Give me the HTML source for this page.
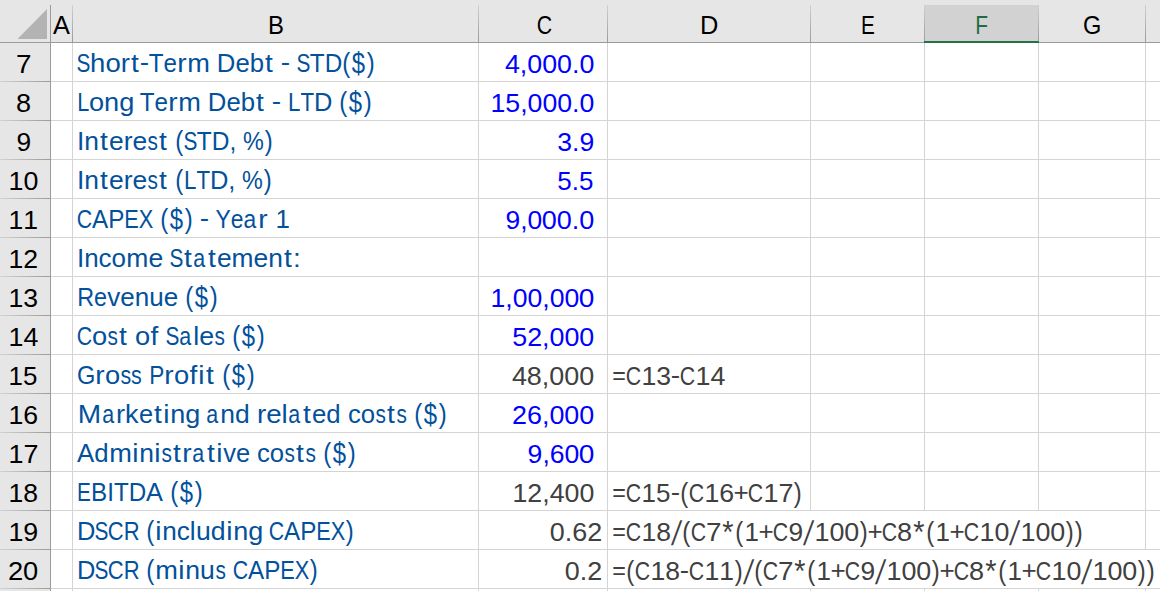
<!DOCTYPE html><html><head><meta charset="utf-8"><title>Sheet</title><style>
html,body{margin:0;padding:0;background:#fff;}
body{width:1160px;height:591px;overflow:hidden;position:relative;font-family:"Liberation Sans",sans-serif;font-size:26px;line-height:39px;font-kerning:none;font-variant-ligatures:none;}
#s{position:absolute;left:0;top:0;width:1160px;height:591px;overflow:hidden;background:#fff;}
#s div,#s svg{position:absolute;}
.hb{background:#e6e6e6;}
.gl{background:#d4d4d4;}
#s .t{white-space:pre;height:39px;line-height:39px;}
.t i{display:inline-block;font-style:normal;white-space:pre;transform-origin:0 28.0px;height:39px;vertical-align:top;}
.lb{color:#03519b;}
.b{color:#0000ff;}
.k{color:#404040;}
.h{color:#000;}
.g{color:#1e6b41;}
</style></head><body><div id="s">
<div class="hb" style="left:0;top:0;width:1160px;height:42px"></div>
<div class="hb" style="left:0;top:0;width:50px;height:591px"></div>
<div style="left:925px;top:5px;width:113px;height:36px;background:#d2d2d2"></div>
<div class="gl" style="left:51px;top:81px;width:1109px;height:1px"></div>
<div style="left:0;top:81px;width:50px;height:1px;background:linear-gradient(to right,#d2d2d2,#9b9b9b)"></div>
<div class="gl" style="left:51px;top:120px;width:1109px;height:1px"></div>
<div style="left:0;top:120px;width:50px;height:1px;background:linear-gradient(to right,#d2d2d2,#9b9b9b)"></div>
<div class="gl" style="left:51px;top:159px;width:1109px;height:1px"></div>
<div style="left:0;top:159px;width:50px;height:1px;background:linear-gradient(to right,#d2d2d2,#9b9b9b)"></div>
<div class="gl" style="left:51px;top:198px;width:1109px;height:1px"></div>
<div style="left:0;top:198px;width:50px;height:1px;background:linear-gradient(to right,#d2d2d2,#9b9b9b)"></div>
<div class="gl" style="left:51px;top:237px;width:1109px;height:1px"></div>
<div style="left:0;top:237px;width:50px;height:1px;background:linear-gradient(to right,#d2d2d2,#9b9b9b)"></div>
<div class="gl" style="left:51px;top:276px;width:1109px;height:1px"></div>
<div style="left:0;top:276px;width:50px;height:1px;background:linear-gradient(to right,#d2d2d2,#9b9b9b)"></div>
<div class="gl" style="left:51px;top:315px;width:1109px;height:1px"></div>
<div style="left:0;top:315px;width:50px;height:1px;background:linear-gradient(to right,#d2d2d2,#9b9b9b)"></div>
<div class="gl" style="left:51px;top:354px;width:1109px;height:1px"></div>
<div style="left:0;top:354px;width:50px;height:1px;background:linear-gradient(to right,#d2d2d2,#9b9b9b)"></div>
<div class="gl" style="left:51px;top:393px;width:1109px;height:1px"></div>
<div style="left:0;top:393px;width:50px;height:1px;background:linear-gradient(to right,#d2d2d2,#9b9b9b)"></div>
<div class="gl" style="left:51px;top:432px;width:1109px;height:1px"></div>
<div style="left:0;top:432px;width:50px;height:1px;background:linear-gradient(to right,#d2d2d2,#9b9b9b)"></div>
<div class="gl" style="left:51px;top:471px;width:1109px;height:1px"></div>
<div style="left:0;top:471px;width:50px;height:1px;background:linear-gradient(to right,#d2d2d2,#9b9b9b)"></div>
<div class="gl" style="left:51px;top:510px;width:1109px;height:1px"></div>
<div style="left:0;top:510px;width:50px;height:1px;background:linear-gradient(to right,#d2d2d2,#9b9b9b)"></div>
<div class="gl" style="left:51px;top:549px;width:1109px;height:1px"></div>
<div style="left:0;top:549px;width:50px;height:1px;background:linear-gradient(to right,#d2d2d2,#9b9b9b)"></div>
<div class="gl" style="left:51px;top:588px;width:1109px;height:1px"></div>
<div style="left:0;top:588px;width:50px;height:1px;background:linear-gradient(to right,#d2d2d2,#9b9b9b)"></div>
<div class="gl" style="left:72px;top:43px;width:1px;height:548px"></div>
<div class="gl" style="left:478px;top:43px;width:1px;height:548px"></div>
<div class="gl" style="left:607px;top:43px;width:1px;height:548px"></div>
<div class="gl" style="left:810px;top:43px;width:1px;height:468px"></div>
<div class="gl" style="left:810px;top:588px;width:1px;height:3px"></div>
<div class="gl" style="left:924px;top:43px;width:1px;height:468px"></div>
<div class="gl" style="left:924px;top:588px;width:1px;height:3px"></div>
<div class="gl" style="left:1038px;top:43px;width:1px;height:468px"></div>
<div class="gl" style="left:1038px;top:588px;width:1px;height:3px"></div>
<div class="gl" style="left:1145px;top:43px;width:1px;height:507px"></div>
<div class="gl" style="left:1145px;top:588px;width:1px;height:3px"></div>
<div style="left:0;top:42px;width:1160px;height:1px;background:#9b9b9b"></div>
<div style="left:50px;top:5px;width:1px;height:591px;background:#9b9b9b"></div>
<div style="left:72px;top:5px;width:1px;height:37px;background:linear-gradient(#cfcfcf,#9b9b9b)"></div>
<div style="left:478px;top:5px;width:1px;height:37px;background:linear-gradient(#cfcfcf,#9b9b9b)"></div>
<div style="left:607px;top:5px;width:1px;height:37px;background:linear-gradient(#cfcfcf,#9b9b9b)"></div>
<div style="left:810px;top:5px;width:1px;height:37px;background:linear-gradient(#cfcfcf,#9b9b9b)"></div>
<div style="left:924px;top:5px;width:1px;height:37px;background:linear-gradient(#cfcfcf,#9b9b9b)"></div>
<div style="left:1038px;top:5px;width:1px;height:37px;background:linear-gradient(#cfcfcf,#9b9b9b)"></div>
<div style="left:1145px;top:5px;width:1px;height:37px;background:linear-gradient(#cfcfcf,#9b9b9b)"></div>
<div style="left:924px;top:41px;width:115px;height:2px;background:#217346"></div>
<svg style="left:0;top:0" width="50" height="42"><polygon points="47,9 47,39 17.5,39" fill="#b3b3b3"/></svg>
<div class="t h" aria-label="A" style="left:52.89px;top:6.00px;width:17px"><i style="width:17px;transform:translateX(0.06px) scaleX(0.9737)">A</i></div>
<div class="t h" aria-label="B" style="left:268.10px;top:6.00px;width:16px"><i style="width:16px;transform:translateX(0.08px) scaleX(0.9188)">B</i></div>
<div class="t h" aria-label="C" style="left:536.61px;top:6.00px;width:15px"><i style="width:15px;transform:translateX(-0.13px) scaleX(0.8190)">C</i></div>
<div class="t h" aria-label="D" style="left:699.90px;top:6.00px;width:18px"><i style="width:18px;transform:translateX(-0.12px) scaleX(0.9785)">D</i></div>
<div class="t h" aria-label="E" style="left:860.98px;top:6.00px;width:14px"><i style="width:14px;transform:translateX(0.07px) scaleX(0.8000)">E</i></div>
<div class="t g" aria-label="F" style="left:975.14px;top:6.00px;width:13px"><i style="width:13px;transform:translateX(0.24px) scaleX(0.8035)">F</i></div>
<div class="t h" aria-label="G" style="left:1083.21px;top:6.00px;width:18px"><i style="width:18px;transform:translateX(-0.10px) scaleX(0.9070)">G</i></div>
<div class="t h" aria-label="7" style="left:15.90px;top:45.00px;width:15px"><i style="width:15px;transform:translateX(-0.04px) scaleX(1.0726)">7</i></div>
<div class="t h" aria-label="8" style="left:15.90px;top:84.00px;width:15px"><i style="width:15px;transform:translateX(-0.01px) scaleX(1.0391)">8</i></div>
<div class="t h" aria-label="9" style="left:15.90px;top:123.00px;width:15px"><i style="width:15px;transform:translateX(0.62px) scaleX(1.0120)">9</i></div>
<div class="t h" aria-label="10" style="left:8.40px;top:162.00px;width:30px"><i style="width:30px;transform:translateX(0.46px) scaleX(1.0316)">10</i></div>
<div class="t h" aria-label="11" style="left:8.40px;top:201.00px;width:30px"><i style="width:30px;transform:translateX(0.49px) scaleX(1.0203)">11</i></div>
<div class="t h" aria-label="12" style="left:8.40px;top:240.00px;width:30px"><i style="width:30px;transform:translateX(0.48px) scaleX(1.0246)">12</i></div>
<div class="t h" aria-label="13" style="left:8.40px;top:279.00px;width:30px"><i style="width:30px;transform:translateX(0.48px) scaleX(1.0230)">13</i></div>
<div class="t h" aria-label="14" style="left:8.40px;top:318.00px;width:30px"><i style="width:30px;transform:translateX(0.46px) scaleX(1.0319)">14</i></div>
<div class="t h" aria-label="15" style="left:8.40px;top:357.00px;width:30px"><i style="width:30px;transform:translateX(0.53px) scaleX(0.9974)">15</i></div>
<div class="t h" aria-label="16" style="left:8.40px;top:396.00px;width:30px"><i style="width:30px;transform:translateX(0.47px) scaleX(1.0268)">16</i></div>
<div class="t h" aria-label="17" style="left:8.40px;top:435.00px;width:30px"><i style="width:30px;transform:translateX(0.45px) scaleX(1.0362)">17</i></div>
<div class="t h" aria-label="18" style="left:8.40px;top:474.00px;width:30px"><i style="width:30px;transform:translateX(0.49px) scaleX(1.0203)">18</i></div>
<div class="t h" aria-label="19" style="left:8.40px;top:513.00px;width:30px"><i style="width:30px;transform:translateX(0.46px) scaleX(1.0309)">19</i></div>
<div class="t h" aria-label="20" style="left:8.40px;top:552.00px;width:30px"><i style="width:30px;transform:translateX(-0.07px) scaleX(1.0508)">20</i></div>
<div class="t lb" aria-label="Short-Term Debt - STD($)" style="left:77.40px;top:44.00px;width:298px"><i style="width:13px;transform:translateX(-0.55px) scaleX(0.8000)">S</i><i style="width:40px;transform:translateX(0.12px) scaleX(1.0584)">hor</i><i style="width:10px;transform:translateX(0.98px) scaleX(1.0800)">t</i><i style="width:9px;transform:translate(-0.17px,-1.29px) scale(1.0800,1.0000)">-</i><i style="width:28px;transform:translateX(-0.20px) scaleX(0.9304)">Te</i><i style="width:10px;transform:translateX(0.27px) scaleX(1.0800)">r</i><i style="width:30px;transform:translateX(0.27px) scaleX(1.0464)">m </i><i style="width:47px;transform:translateX(-0.14px) scaleX(0.9890)">Deb</i><i style="width:17px;transform:translateX(0.98px) scaleX(1.0800)">t </i><i style="width:16px;transform:translate(-0.17px,-1.29px) scale(1.0800,1.0000)">- </i><i style="width:13px;transform:translateX(-0.55px) scaleX(0.8000)">S</i><i style="width:32px;transform:translateX(-0.21px) scaleX(0.9350)">TD</i><i style="width:9px;transform:translate(0.18px,-0.28px) scale(0.9200,1.0362)">(</i><i style="width:15px;transform:translate(0.87px,0.94px) scale(0.9200,1.1402)">$</i><i style="width:9px;transform:translate(0.86px,-0.28px) scale(0.9200,1.0362)">)</i></div>
<div class="t lb" aria-label="Long Term Debt - LTD ($)" style="left:77.40px;top:83.00px;width:295px"><i style="width:12px;transform:translateX(0.17px) scaleX(0.8343)">L</i><i style="width:51px;transform:translateX(-0.08px) scaleX(1.0447)">ong </i><i style="width:28px;transform:translateX(-0.20px) scaleX(0.9304)">Te</i><i style="width:10px;transform:translateX(0.27px) scaleX(1.0800)">r</i><i style="width:30px;transform:translateX(0.27px) scaleX(1.0464)">m </i><i style="width:47px;transform:translateX(-0.14px) scaleX(0.9890)">Deb</i><i style="width:17px;transform:translateX(0.98px) scaleX(1.0800)">t </i><i style="width:16px;transform:translate(-0.17px,-1.29px) scale(1.0800,1.0000)">- </i><i style="width:26px;transform:translateX(0.12px) scaleX(0.8585)">LT</i><i style="width:25px;transform:translateX(-0.12px) scaleX(0.9785)">D </i><i style="width:9px;transform:translate(0.18px,-0.28px) scale(0.9200,1.0362)">(</i><i style="width:15px;transform:translate(0.87px,0.94px) scale(0.9200,1.1402)">$</i><i style="width:9px;transform:translate(0.86px,-0.28px) scale(0.9200,1.0362)">)</i></div>
<div class="t lb" aria-label="Interest (STD, %)" style="left:77.40px;top:122.00px;width:196px"><i style="width:22px;transform:translateX(-0.07px) scaleX(1.0153)">In</i><i style="width:10px;transform:translateX(0.98px) scaleX(1.0800)">t</i><i style="width:38px;transform:translateX(-0.06px) scaleX(1.0162)">ere</i><i style="width:11px;transform:translateX(0.39px) scaleX(0.8000)">s</i><i style="width:17px;transform:translateX(0.98px) scaleX(1.0800)">t </i><i style="width:9px;transform:translate(0.18px,-0.28px) scale(0.9200,1.0362)">(</i><i style="width:13px;transform:translateX(-0.55px) scaleX(0.8000)">S</i><i style="width:46px;transform:translateX(-0.21px) scaleX(0.9432)">TD, </i><i style="width:21px;transform:translateX(0.10px) scaleX(0.8997)">%</i><i style="width:9px;transform:translate(0.86px,-0.28px) scale(0.9200,1.0362)">)</i></div>
<div class="t lb" aria-label="Interest (LTD, %)" style="left:77.40px;top:161.00px;width:195px"><i style="width:22px;transform:translateX(-0.07px) scaleX(1.0153)">In</i><i style="width:10px;transform:translateX(0.98px) scaleX(1.0800)">t</i><i style="width:38px;transform:translateX(-0.06px) scaleX(1.0162)">ere</i><i style="width:11px;transform:translateX(0.39px) scaleX(0.8000)">s</i><i style="width:17px;transform:translateX(0.98px) scaleX(1.0800)">t </i><i style="width:9px;transform:translate(0.18px,-0.28px) scale(0.9200,1.0362)">(</i><i style="width:26px;transform:translateX(0.12px) scaleX(0.8585)">LT</i><i style="width:32px;transform:translateX(-0.12px) scaleX(0.9809)">D, </i><i style="width:21px;transform:translateX(0.10px) scaleX(0.8997)">%</i><i style="width:9px;transform:translate(0.86px,-0.28px) scale(0.9200,1.0362)">)</i></div>
<div class="t lb" aria-label="CAPEX ($) - Year 1" style="left:77.40px;top:200.00px;width:213px"><i style="width:15px;transform:translateX(-0.13px) scaleX(0.8190)">C</i><i style="width:32px;transform:translateX(0.07px) scaleX(0.9314)">AP</i><i style="width:36px;transform:translateX(0.27px) scaleX(0.8371)">EX </i><i style="width:9px;transform:translate(0.18px,-0.28px) scale(0.9200,1.0362)">(</i><i style="width:15px;transform:translate(0.87px,0.94px) scale(0.9200,1.1402)">$</i><i style="width:16px;transform:translate(0.86px,-0.28px) scale(0.9200,1.0362)">) </i><i style="width:16px;transform:translate(-0.17px,-1.29px) scale(1.0800,1.0000)">- </i><i style="width:42px;transform:translateX(-0.50px) scaleX(0.8802)">Yea</i><i style="width:17px;transform:translateX(0.27px) scaleX(1.0800)">r </i><i style="width:15px;transform:translateX(0.53px) scaleX(0.9983)">1</i></div>
<div class="t lb" aria-label="Income Statement:" style="left:77.40px;top:239.00px;width:224px"><i style="width:49px;transform:translateX(-0.03px) scaleX(0.9983)">Inco</i><i style="width:44px;transform:translateX(0.32px) scaleX(1.0191)">me </i><i style="width:13px;transform:translateX(-0.55px) scaleX(0.8000)">S</i><i style="width:10px;transform:translateX(0.98px) scaleX(1.0800)">t</i><i style="width:14px;transform:translateX(0.28px) scaleX(0.8256)">a</i><i style="width:10px;transform:translateX(0.98px) scaleX(1.0800)">t</i><i style="width:66px;transform:translateX(-0.06px) scaleX(1.0148)">emen</i><i style="width:10px;transform:translateX(0.98px) scaleX(1.0800)">t</i><i style="width:8px;transform:translateX(0.04px) scaleX(1.0800)">:</i></div>
<div class="t lb" aria-label="Revenue ($)" style="left:77.40px;top:278.00px;width:141px"><i style="width:30px;transform:translateX(0.17px) scaleX(0.8972)">Re</i><i style="width:78px;transform:translateX(0.18px) scaleX(1.0013)">venue </i><i style="width:9px;transform:translate(0.18px,-0.28px) scale(0.9200,1.0362)">(</i><i style="width:15px;transform:translate(0.87px,0.94px) scale(0.9200,1.1402)">$</i><i style="width:9px;transform:translate(0.86px,-0.28px) scale(0.9200,1.0362)">)</i></div>
<div class="t lb" aria-label="Cost of Sales ($)" style="left:77.40px;top:317.00px;width:188px"><i style="width:15px;transform:translateX(-0.13px) scaleX(0.8190)">C</i><i style="width:15px;transform:translateX(-0.08px) scaleX(1.0488)">o</i><i style="width:11px;transform:translateX(0.39px) scaleX(0.8000)">s</i><i style="width:17px;transform:translateX(0.98px) scaleX(1.0800)">t </i><i style="width:15px;transform:translateX(-0.08px) scaleX(1.0488)">o</i><i style="width:16px;transform:translateX(0.45px) scaleX(1.0800)">f </i><i style="width:13px;transform:translateX(-0.55px) scaleX(0.8000)">S</i><i style="width:14px;transform:translateX(0.28px) scaleX(0.8256)">a</i><i style="width:21px;transform:translateX(0.27px) scaleX(1.0312)">le</i><i style="width:18px;transform:translateX(0.39px) scaleX(0.8000)">s </i><i style="width:9px;transform:translate(0.18px,-0.28px) scale(0.9200,1.0362)">(</i><i style="width:15px;transform:translate(0.87px,0.94px) scale(0.9200,1.1402)">$</i><i style="width:9px;transform:translate(0.86px,-0.28px) scale(0.9200,1.0362)">)</i></div>
<div class="t lb" aria-label="Gross Profit ($)" style="left:77.40px;top:356.00px;width:178px"><i style="width:18px;transform:translateX(-0.10px) scaleX(0.9070)">G</i><i style="width:10px;transform:translateX(0.27px) scaleX(1.0800)">r</i><i style="width:15px;transform:translateX(-0.08px) scaleX(1.0488)">o</i><i style="width:29px;transform:translateX(0.40px) scaleX(0.8231)">ss </i><i style="width:15px;transform:translateX(0.23px) scaleX(0.8681)">P</i><i style="width:10px;transform:translateX(0.27px) scaleX(1.0800)">r</i><i style="width:15px;transform:translateX(-0.08px) scaleX(1.0488)">o</i><i style="width:9px;transform:translateX(0.45px) scaleX(1.0800)">f</i><i style="width:7px;transform:translateX(0.37px) scaleX(1.0800)">i</i><i style="width:17px;transform:translateX(0.98px) scaleX(1.0800)">t </i><i style="width:9px;transform:translate(0.18px,-0.28px) scale(0.9200,1.0362)">(</i><i style="width:15px;transform:translate(0.87px,0.94px) scale(0.9200,1.1402)">$</i><i style="width:9px;transform:translate(0.86px,-0.28px) scale(0.9200,1.0362)">)</i></div>
<div class="t lb" aria-label="Marketing and related costs ($)" style="left:77.40px;top:395.00px;width:370px"><i style="width:25px;transform:translateX(0.80px) scaleX(1.0800)">M</i><i style="width:14px;transform:translateX(0.28px) scaleX(0.8256)">a</i><i style="width:23px;transform:translateX(0.06px) scaleX(1.0411)">rk</i><i style="width:14px;transform:translateX(-0.01px) scaleX(0.9746)">e</i><i style="width:10px;transform:translateX(0.98px) scaleX(1.0800)">t</i><i style="width:7px;transform:translateX(0.37px) scaleX(1.0800)">i</i><i style="width:36px;transform:translateX(0.19px) scaleX(1.0388)">ng </i><i style="width:14px;transform:translateX(0.28px) scaleX(0.8256)">a</i><i style="width:37px;transform:translateX(0.22px) scaleX(1.0181)">nd </i><i style="width:31px;transform:translateX(0.02px) scaleX(1.0643)">rel</i><i style="width:14px;transform:translateX(0.28px) scaleX(0.8256)">a</i><i style="width:10px;transform:translateX(0.98px) scaleX(1.0800)">t</i><i style="width:36px;transform:translateX(-0.03px) scaleX(0.9908)">ed </i><i style="width:27px;transform:translateX(-0.11px) scaleX(0.9880)">co</i><i style="width:11px;transform:translateX(0.39px) scaleX(0.8000)">s</i><i style="width:10px;transform:translateX(0.98px) scaleX(1.0800)">t</i><i style="width:18px;transform:translateX(0.39px) scaleX(0.8000)">s </i><i style="width:9px;transform:translate(0.18px,-0.28px) scale(0.9200,1.0362)">(</i><i style="width:15px;transform:translate(0.87px,0.94px) scale(0.9200,1.1402)">$</i><i style="width:9px;transform:translate(0.86px,-0.28px) scale(0.9200,1.0362)">)</i></div>
<div class="t lb" aria-label="Administrative costs ($)" style="left:77.40px;top:434.00px;width:279px"><i style="width:32px;transform:translateX(0.06px) scaleX(0.9924)">Ad</i><i style="width:23px;transform:translateX(0.27px) scaleX(1.0464)">m</i><i style="width:7px;transform:translateX(0.37px) scaleX(1.0800)">i</i><i style="width:15px;transform:translateX(0.22px) scaleX(1.0183)">n</i><i style="width:7px;transform:translateX(0.37px) scaleX(1.0800)">i</i><i style="width:11px;transform:translateX(0.39px) scaleX(0.8000)">s</i><i style="width:10px;transform:translateX(0.98px) scaleX(1.0800)">t</i><i style="width:10px;transform:translateX(0.27px) scaleX(1.0800)">r</i><i style="width:14px;transform:translateX(0.28px) scaleX(0.8256)">a</i><i style="width:10px;transform:translateX(0.98px) scaleX(1.0800)">t</i><i style="width:7px;transform:translateX(0.37px) scaleX(1.0800)">i</i><i style="width:34px;transform:translateX(0.18px) scaleX(0.9797)">ve </i><i style="width:27px;transform:translateX(-0.11px) scaleX(0.9880)">co</i><i style="width:11px;transform:translateX(0.39px) scaleX(0.8000)">s</i><i style="width:10px;transform:translateX(0.98px) scaleX(1.0800)">t</i><i style="width:18px;transform:translateX(0.39px) scaleX(0.8000)">s </i><i style="width:9px;transform:translate(0.18px,-0.28px) scale(0.9200,1.0362)">(</i><i style="width:15px;transform:translate(0.87px,0.94px) scale(0.9200,1.1402)">$</i><i style="width:9px;transform:translate(0.86px,-0.28px) scale(0.9200,1.0362)">)</i></div>
<div class="t lb" aria-label="EBITDA ($)" style="left:77.40px;top:473.00px;width:126px"><i style="width:14px;transform:translateX(0.07px) scaleX(0.8000)">E</i><i style="width:55px;transform:translateX(0.05px) scaleX(0.9311)">BITD</i><i style="width:24px;transform:translateX(0.06px) scaleX(0.9737)">A </i><i style="width:9px;transform:translate(0.18px,-0.28px) scale(0.9200,1.0362)">(</i><i style="width:15px;transform:translate(0.87px,0.94px) scale(0.9200,1.1402)">$</i><i style="width:9px;transform:translate(0.86px,-0.28px) scale(0.9200,1.0362)">)</i></div>
<div class="t lb" aria-label="DSCR (including CAPEX)" style="left:77.40px;top:512.00px;width:277px"><i style="width:18px;transform:translateX(-0.12px) scaleX(0.9785)">D</i><i style="width:13px;transform:translateX(-0.55px) scaleX(0.8000)">S</i><i style="width:38px;transform:translateX(-0.17px) scaleX(0.8458)">CR </i><i style="width:9px;transform:translate(0.18px,-0.28px) scale(0.9200,1.0362)">(</i><i style="width:7px;transform:translateX(0.37px) scaleX(1.0800)">i</i><i style="width:34px;transform:translateX(0.25px) scaleX(1.0056)">ncl</i><i style="width:30px;transform:translateX(0.04px) scaleX(1.0249)">ud</i><i style="width:7px;transform:translateX(0.37px) scaleX(1.0800)">i</i><i style="width:36px;transform:translateX(0.19px) scaleX(1.0388)">ng </i><i style="width:15px;transform:translateX(-0.13px) scaleX(0.8190)">C</i><i style="width:32px;transform:translateX(0.07px) scaleX(0.9314)">AP</i><i style="width:29px;transform:translateX(0.27px) scaleX(0.8371)">EX</i><i style="width:9px;transform:translate(0.86px,-0.28px) scale(0.9200,1.0362)">)</i></div>
<div class="t lb" aria-label="DSCR (minus CAPEX)" style="left:77.40px;top:551.00px;width:241px"><i style="width:18px;transform:translateX(-0.12px) scaleX(0.9785)">D</i><i style="width:13px;transform:translateX(-0.55px) scaleX(0.8000)">S</i><i style="width:38px;transform:translateX(-0.17px) scaleX(0.8458)">CR </i><i style="width:9px;transform:translate(0.18px,-0.28px) scale(0.9200,1.0362)">(</i><i style="width:23px;transform:translateX(0.27px) scaleX(1.0464)">m</i><i style="width:7px;transform:translateX(0.37px) scaleX(1.0800)">i</i><i style="width:30px;transform:translateX(0.22px) scaleX(1.0223)">nu</i><i style="width:18px;transform:translateX(0.39px) scaleX(0.8000)">s </i><i style="width:15px;transform:translateX(-0.13px) scaleX(0.8190)">C</i><i style="width:32px;transform:translateX(0.07px) scaleX(0.9314)">AP</i><i style="width:29px;transform:translateX(0.27px) scaleX(0.8371)">EX</i><i style="width:9px;transform:translate(0.86px,-0.28px) scale(0.9200,1.0362)">)</i></div>
<div class="t b" aria-label="4,000.0" style="left:505.00px;top:45.00px;width:89px"><i style="width:89px;transform:translateX(-0.12px) scaleX(1.0308)">4,000.0</i></div>
<div class="t b" aria-label="15,000.0" style="left:490.00px;top:84.00px;width:104px"><i style="width:104px;transform:translateX(0.47px) scaleX(1.0258)">15,000.0</i></div>
<div class="t b" aria-label="3.9" style="left:557.00px;top:123.00px;width:37px"><i style="width:37px;transform:translateX(0.33px) scaleX(1.0219)">3.9</i></div>
<div class="t b" aria-label="5.5" style="left:557.00px;top:162.00px;width:37px"><i style="width:37px;transform:translateX(0.28px) scaleX(0.9988)">5.5</i></div>
<div class="t b" aria-label="9,000.0" style="left:505.00px;top:201.00px;width:89px"><i style="width:37px;transform:translateX(0.62px) scaleX(1.0143)">9,0</i><i style="width:52px;transform:translateX(-0.31px) scaleX(1.0397)">00.0</i></div>
<div class="t b" aria-label="1,00,000" style="left:490.00px;top:279.00px;width:104px"><i style="width:89px;transform:translateX(0.48px) scaleX(1.0238)">1,00,00</i><i style="width:15px;transform:translateX(-0.31px) scaleX(1.0800)">0</i></div>
<div class="t b" aria-label="52,000" style="left:512.00px;top:318.00px;width:82px"><i style="width:82px;transform:translateX(0.24px) scaleX(1.0318)">52,000</i></div>
<div class="t k" aria-label="48,000" style="left:512.00px;top:357.00px;width:82px"><i style="width:82px;transform:translateX(-0.12px) scaleX(1.0365)">48,000</i></div>
<div class="t b" aria-label="26,000" style="left:512.00px;top:396.00px;width:82px"><i style="width:82px;transform:translateX(-0.05px) scaleX(1.0356)">26,000</i></div>
<div class="t b" aria-label="9,600" style="left:527.00px;top:435.00px;width:67px"><i style="width:52px;transform:translateX(0.61px) scaleX(1.0212)">9,60</i><i style="width:15px;transform:translateX(-0.31px) scaleX(1.0800)">0</i></div>
<div class="t k" aria-label="12,400" style="left:512.00px;top:474.00px;width:82px"><i style="width:82px;transform:translateX(0.47px) scaleX(1.0290)">12,400</i></div>
<div class="t k" aria-label="0.62" style="left:550.00px;top:513.00px;width:52px"><i style="width:52px;transform:translateX(-0.30px) scaleX(1.0360)">0.62</i></div>
<div class="t k" aria-label="0.2" style="left:565.00px;top:552.00px;width:37px"><i style="width:37px;transform:translateX(-0.30px) scaleX(1.0354)">0.2</i></div>
<div class="t k" aria-label="=C13-C14" style="left:611.50px;top:357.00px;width:113px"><i style="width:14px;transform:translate(0.19px,-0.65px) scale(0.8964,1.0000)">=</i><i style="width:15px;transform:translateX(-0.13px) scaleX(0.8190)">C</i><i style="width:30px;transform:translateX(0.48px) scaleX(1.0230)">13</i><i style="width:9px;transform:translate(-0.17px,-1.29px) scale(1.0800,1.0000)">-</i><i style="width:15px;transform:translateX(-0.13px) scaleX(0.8190)">C</i><i style="width:30px;transform:translateX(0.46px) scaleX(1.0319)">14</i></div>
<div class="t k" aria-label="=C15-(C16+C17)" style="left:611.50px;top:474.00px;width:190px"><i style="width:14px;transform:translate(0.19px,-0.65px) scale(0.8964,1.0000)">=</i><i style="width:15px;transform:translateX(-0.13px) scaleX(0.8190)">C</i><i style="width:30px;transform:translateX(0.53px) scaleX(0.9974)">15</i><i style="width:9px;transform:translate(-0.17px,-1.29px) scale(1.0800,1.0000)">-</i><i style="width:9px;transform:translate(0.18px,-0.28px) scale(0.9200,1.0362)">(</i><i style="width:15px;transform:translateX(-0.13px) scaleX(0.8190)">C</i><i style="width:30px;transform:translateX(0.47px) scaleX(1.0268)">16</i><i style="width:14px;transform:translate(-0.62px,-0.52px) scale(1.0029,1.0000)">+</i><i style="width:15px;transform:translateX(-0.13px) scaleX(0.8190)">C</i><i style="width:30px;transform:translateX(0.45px) scaleX(1.0362)">17</i><i style="width:9px;transform:translate(0.86px,-0.28px) scale(0.9200,1.0362)">)</i></div>
<div class="t k" aria-label="=C18/(C7*(1+C9/100)+C8*(1+C10/100))" style="left:611.50px;top:513.00px;width:471px"><i style="width:14px;transform:translate(0.19px,-0.65px) scale(0.8964,1.0000)">=</i><i style="width:15px;transform:translateX(-0.13px) scaleX(0.8190)">C</i><i style="width:30px;transform:translateX(0.49px) scaleX(1.0203)">18</i><i style="width:11px;transform:translate(-0.12px,4.16px) skewX(-9.18deg) scale(1.0000,1.3198)">/</i><i style="width:9px;transform:translate(0.18px,-0.28px) scale(0.9200,1.0362)">(</i><i style="width:15px;transform:translateX(-0.13px) scaleX(0.8190)">C</i><i style="width:15px;transform:translateX(-0.04px) scaleX(1.0726)">7</i><i style="width:14px;transform:translate(1.37px,1.67px) scale(1.1084,1.1722)">*</i><i style="width:9px;transform:translate(0.18px,-0.28px) scale(0.9200,1.0362)">(</i><i style="width:15px;transform:translateX(0.53px) scaleX(0.9983)">1</i><i style="width:14px;transform:translate(-0.62px,-0.52px) scale(1.0029,1.0000)">+</i><i style="width:15px;transform:translateX(-0.13px) scaleX(0.8190)">C</i><i style="width:15px;transform:translateX(0.62px) scaleX(1.0120)">9</i><i style="width:11px;transform:translate(-0.12px,4.16px) skewX(-9.18deg) scale(1.0000,1.3198)">/</i><i style="width:45px;transform:translateX(0.46px) scaleX(1.0337)">100</i><i style="width:9px;transform:translate(0.86px,-0.28px) scale(0.9200,1.0362)">)</i><i style="width:14px;transform:translate(-0.62px,-0.52px) scale(1.0029,1.0000)">+</i><i style="width:15px;transform:translateX(-0.13px) scaleX(0.8190)">C</i><i style="width:15px;transform:translateX(-0.01px) scaleX(1.0391)">8</i><i style="width:14px;transform:translate(1.37px,1.67px) scale(1.1084,1.1722)">*</i><i style="width:9px;transform:translate(0.18px,-0.28px) scale(0.9200,1.0362)">(</i><i style="width:15px;transform:translateX(0.53px) scaleX(0.9983)">1</i><i style="width:14px;transform:translate(-0.62px,-0.52px) scale(1.0029,1.0000)">+</i><i style="width:15px;transform:translateX(-0.13px) scaleX(0.8190)">C</i><i style="width:30px;transform:translateX(0.46px) scaleX(1.0316)">10</i><i style="width:11px;transform:translate(-0.12px,4.16px) skewX(-9.18deg) scale(1.0000,1.3198)">/</i><i style="width:45px;transform:translateX(0.46px) scaleX(1.0337)">100</i><i style="width:9px;transform:translate(0.86px,-0.28px) scale(0.9200,1.0362)">)</i><i style="width:9px;transform:translate(0.86px,-0.28px) scale(0.9200,1.0362)">)</i></div>
<div class="t k" aria-label="=(C18-C11)/(C7*(1+C9/100)+C8*(1+C10/100))" style="left:611.50px;top:552.00px;width:543px"><i style="width:14px;transform:translate(0.19px,-0.65px) scale(0.8964,1.0000)">=</i><i style="width:9px;transform:translate(0.18px,-0.28px) scale(0.9200,1.0362)">(</i><i style="width:15px;transform:translateX(-0.13px) scaleX(0.8190)">C</i><i style="width:30px;transform:translateX(0.49px) scaleX(1.0203)">18</i><i style="width:9px;transform:translate(-0.17px,-1.29px) scale(1.0800,1.0000)">-</i><i style="width:15px;transform:translateX(-0.13px) scaleX(0.8190)">C</i><i style="width:30px;transform:translateX(0.49px) scaleX(1.0203)">11</i><i style="width:9px;transform:translate(0.86px,-0.28px) scale(0.9200,1.0362)">)</i><i style="width:11px;transform:translate(-0.12px,4.16px) skewX(-9.18deg) scale(1.0000,1.3198)">/</i><i style="width:9px;transform:translate(0.18px,-0.28px) scale(0.9200,1.0362)">(</i><i style="width:15px;transform:translateX(-0.13px) scaleX(0.8190)">C</i><i style="width:15px;transform:translateX(-0.04px) scaleX(1.0726)">7</i><i style="width:14px;transform:translate(1.37px,1.67px) scale(1.1084,1.1722)">*</i><i style="width:9px;transform:translate(0.18px,-0.28px) scale(0.9200,1.0362)">(</i><i style="width:15px;transform:translateX(0.53px) scaleX(0.9983)">1</i><i style="width:14px;transform:translate(-0.62px,-0.52px) scale(1.0029,1.0000)">+</i><i style="width:15px;transform:translateX(-0.13px) scaleX(0.8190)">C</i><i style="width:15px;transform:translateX(0.62px) scaleX(1.0120)">9</i><i style="width:11px;transform:translate(-0.12px,4.16px) skewX(-9.18deg) scale(1.0000,1.3198)">/</i><i style="width:45px;transform:translateX(0.46px) scaleX(1.0337)">100</i><i style="width:9px;transform:translate(0.86px,-0.28px) scale(0.9200,1.0362)">)</i><i style="width:14px;transform:translate(-0.62px,-0.52px) scale(1.0029,1.0000)">+</i><i style="width:15px;transform:translateX(-0.13px) scaleX(0.8190)">C</i><i style="width:15px;transform:translateX(-0.01px) scaleX(1.0391)">8</i><i style="width:14px;transform:translate(1.37px,1.67px) scale(1.1084,1.1722)">*</i><i style="width:9px;transform:translate(0.18px,-0.28px) scale(0.9200,1.0362)">(</i><i style="width:15px;transform:translateX(0.53px) scaleX(0.9983)">1</i><i style="width:14px;transform:translate(-0.62px,-0.52px) scale(1.0029,1.0000)">+</i><i style="width:15px;transform:translateX(-0.13px) scaleX(0.8190)">C</i><i style="width:30px;transform:translateX(0.46px) scaleX(1.0316)">10</i><i style="width:11px;transform:translate(-0.12px,4.16px) skewX(-9.18deg) scale(1.0000,1.3198)">/</i><i style="width:45px;transform:translateX(0.46px) scaleX(1.0337)">100</i><i style="width:9px;transform:translate(0.86px,-0.28px) scale(0.9200,1.0362)">)</i><i style="width:9px;transform:translate(0.86px,-0.28px) scale(0.9200,1.0362)">)</i></div>
</div></body></html>
